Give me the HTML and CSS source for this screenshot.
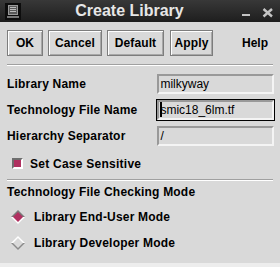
FILE: index.html
```html
<!DOCTYPE html>
<html lang="en">
<head>
  <meta charset="UTF-8" />
  <title>Create Library</title>
  <link rel="stylesheet" href="styles.css">
</head>
<body>
  <div class="window">
    <div class="titlebar">
      <svg class="app-icon" width="16" height="17" viewBox="0 0 16 17">
        <rect x="0" y="0" width="16" height="17" fill="#0d0d0d"/>
        <rect x="3" y="2" width="10" height="10" fill="#9a9a9a"/>
        <rect x="4" y="3" width="8" height="8" fill="#5a5a5a"/>
        <rect x="5" y="4" width="6" height="1" fill="#bbb"/>
        <rect x="5" y="6" width="6" height="1" fill="#bbb"/>
        <rect x="5" y="8" width="6" height="1" fill="#bbb"/>
        <rect x="2" y="13" width="12" height="2" fill="#777"/>
      </svg>
      <div class="title">Create Library</div>
      <svg class="win-ctrls" width="42" height="22" viewBox="0 0 42 22">
        <rect x="4" y="14" width="8" height="2" fill="#c4c4c4"/>
        <path d="M25.5 9 L34 16.5 M34 9 L25.5 16.5" stroke="#c4c4c4" stroke-width="2.4"/>
      </svg>
    </div>

    <div class="dialog">
      <div class="actions">
        <button class="btn btn-ok">OK</button>
        <button class="btn btn-cancel">Cancel</button>
        <button class="btn btn-default">Default</button>
        <button class="btn btn-apply">Apply</button>
        <span class="help">Help</span>
      </div>

      <div class="sep"></div>

      <div class="fields">
        <div class="field">
          <span class="field-label">Library Name</span>
          <div class="entry">milkyway</div>
        </div>
        <div class="field">
          <span class="field-label">Technology File Name</span>
          <div class="entry focus"><span class="caret"></span>smic18_6lm.tf</div>
        </div>
        <div class="field">
          <span class="field-label">Hierarchy Separator</span>
          <div class="entry">/</div>
        </div>
      </div>

      <div class="check">
        <span class="checkbox"></span>
        <span>Set Case Sensitive</span>
      </div>

      <div class="sep sep-lower"></div>

      <div class="group-title">Technology File Checking Mode</div>

      <div class="radio">
        <svg class="diamond" width="14" height="14" viewBox="0 0 14 14">
          <polygon points="0,7 7,0 14,7" fill="#7a7a7a"/>
          <polygon points="0,7 7,14 14,7" fill="#ffffff"/>
          <polygon points="2,7 7,2 12,7 7,12" fill="#b03060"/>
        </svg>
        <span>Library End-User Mode</span>
      </div>
      <div class="radio">
        <svg class="diamond" width="14" height="14" viewBox="0 0 14 14">
          <polygon points="0,7 7,0 14,7" fill="#ffffff"/>
          <polygon points="0,7 7,14 14,7" fill="#8a8a8a"/>
          <polygon points="2,7 7,2 12,7 7,12" fill="#d9d9d9"/>
        </svg>
        <span>Library Developer Mode</span>
      </div>
    </div>
  </div>
</body>
</html>
```

FILE: styles.css
```css
:root {
  --bg: #d9d9d9;
  --light: #ffffff;
  --select: #b03060;
}
body {
  margin: 0;
  background: #ededed;
  font-family: "Liberation Sans", Arial, sans-serif;
  color: #000;
}
.window {
  width: 280px;
  height: 263px;
  background: var(--bg);
  overflow: hidden;
}
.titlebar {
  height: 22px;
  display: flex;
  align-items: center;
  background: linear-gradient(#383838, #1e1e1e);
}
.app-icon {
  margin-left: 5px;
  flex: none;
}
.title {
  flex: 1;
  text-align: center;
  color: #e6e6e6;
  font-size: 16px;
  font-weight: bold;
  line-height: 22px;
}
.win-ctrls { flex: none; }

.dialog {
  padding: 8px 5px 0 7px;
}
.actions {
  display: flex;
  align-items: center;
  gap: 5px;
  height: 26px;
}
.btn {
  height: 26px;
  box-sizing: border-box;
  padding: 0;
  background: var(--bg);
  border: 1px solid #7d7d7d;
  box-shadow: inset 1px 1px 0 var(--light), inset -1px -1px 0 #a8a8a8;
  font-family: inherit;
  font-size: 12px;
  font-weight: bold;
  letter-spacing: 0.1px;
  color: #000;
}
.btn-ok { width: 36px; }
.btn-cancel { width: 54px; }
.btn-default { width: 57px; }
.btn-apply { width: 43px; margin-left: 1px; }
.help {
  margin-left: 24px;
  font-size: 12px;
  font-weight: bold;
}

.sep {
  margin: 8px 2px 0 0;
  border-top: 1px solid #a0a0a0;
  border-bottom: 1px solid var(--light);
}
.sep-lower {
  margin-top: 4px;
}

.fields {
  margin-top: 7px;
}
.field {
  display: flex;
  align-items: center;
  height: 22px;
  margin-bottom: 4px;
  font-size: 12px;
}
.field-label {
  width: 150px;
  font-weight: bold;
  letter-spacing: 0.2px;
}
.entry {
  width: 117px;
  height: 20px;
  margin: 1px;
  box-sizing: border-box;
  border: 2px solid;
  border-color: #999 #f4f4f4 #f4f4f4 #999;
  padding-left: 1px;
  line-height: 16px;
  font-size: 12px;
  white-space: nowrap;
}
.entry.focus {
  outline: 1px solid #000;
}
.caret {
  display: inline-block;
  width: 2px;
  height: 15px;
  margin-right: -2px;
  background: #000;
  vertical-align: -3px;
}

.check {
  display: flex;
  align-items: center;
  height: 23px;
  padding-top: 1px;
  font-size: 12px;
  font-weight: bold;
  letter-spacing: 0.25px;
}
.checkbox {
  width: 11px;
  height: 11px;
  box-sizing: border-box;
  margin: 0 7px 0 5px;
  background: var(--select);
  border: 2px solid;
  border-color: #6e6e6e var(--light) var(--light) #6e6e6e;
}

.group-title {
  height: 23px;
  line-height: 23px;
  font-size: 12px;
  font-weight: bold;
  letter-spacing: 0.2px;
}
.radio {
  display: flex;
  align-items: center;
  height: 26px;
  font-size: 12px;
  font-weight: bold;
  letter-spacing: 0.2px;
}
.diamond {
  margin: 0 9px 0 4px;
  flex: none;
}
```
